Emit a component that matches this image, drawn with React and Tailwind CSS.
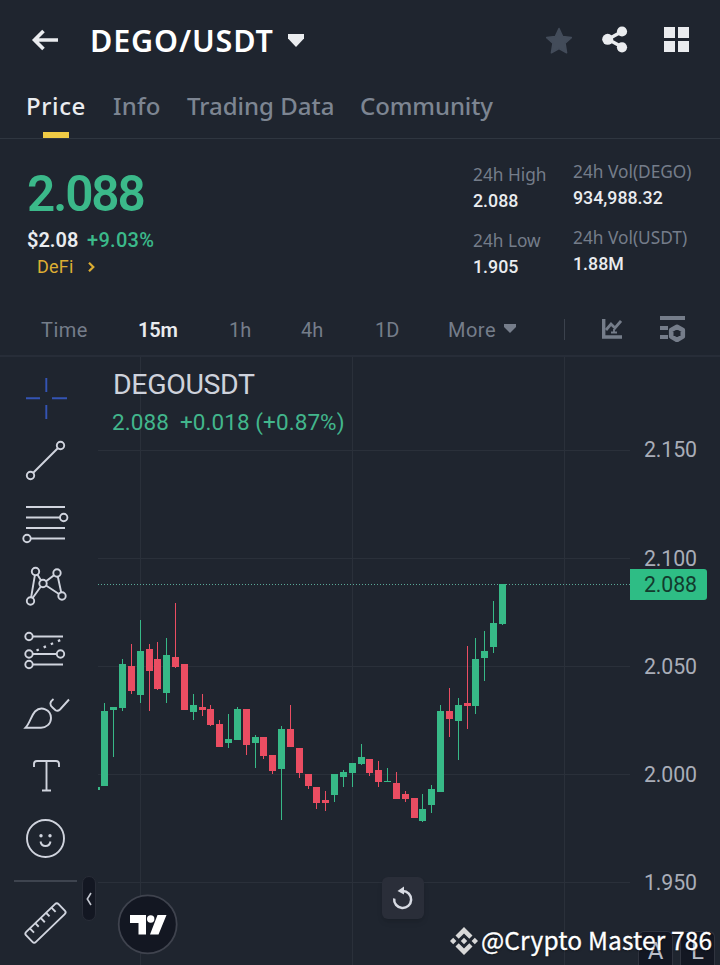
import React from "react";

const UP = "#37b987";
const DOWN = "#ea4d62";

// [left, high, bodyTop, bodyBottom, low, rising]
const candles = [
  [101, 703, 711, 786, 786, 1], [110, 707, 707, 710, 757, 1], [119, 659, 664, 708, 711, 1],
  [128, 644, 666, 691, 694, 0], [137, 620, 651, 695, 703, 1], [146, 644, 649, 671, 711, 0],
  [154, 642, 659, 689, 690, 0], [163, 638, 655, 693, 703, 1], [172, 603, 657, 667, 668, 0],
  [181, 664, 664, 710, 710, 0], [190, 694, 705, 712, 720, 1], [199, 694, 707, 710, 716, 0],
  [207, 705, 709, 725, 726, 0], [216, 720, 724, 747, 747, 0], [225, 714, 739, 743, 748, 1],
  [234, 707, 709, 740, 740, 1], [243, 709, 709, 745, 755, 0], [252, 735, 737, 743, 768, 1],
  [260, 737, 737, 756, 759, 0], [269, 755, 755, 771, 774, 0], [278, 726, 729, 769, 820, 1],
  [287, 705, 729, 747, 747, 0], [296, 748, 748, 773, 778, 0], [305, 774, 774, 786, 789, 0],
  [313, 787, 787, 803, 809, 0], [322, 791, 800, 803, 811, 0], [331, 774, 774, 795, 802, 1],
  [340, 770, 772, 777, 787, 1], [349, 763, 763, 773, 787, 1], [358, 744, 757, 764, 765, 1],
  [366, 759, 759, 773, 776, 0], [375, 761, 770, 782, 787, 0], [384, 768, 781, 782, 782, 1],
  [393, 772, 783, 799, 799, 0], [402, 791, 794, 799, 802, 0], [411, 798, 798, 818, 818, 0],
  [419, 794, 809, 821, 822, 1], [428, 785, 789, 805, 813, 1], [437, 705, 711, 792, 792, 1],
  [446, 688, 711, 719, 737, 0], [455, 698, 705, 721, 760, 1], [464, 646, 703, 706, 729, 0],
  [472, 638, 659, 706, 714, 1], [481, 631, 651, 658, 681, 1], [490, 601, 623, 647, 653, 1],
  [499, 584, 584, 624, 625, 1],
];

const ticks = [["2.150", 450], ["2.100", 558], ["2.050", 666], ["2.000", 774], ["1.950", 882]];

function Header() {
  return (
    <header className="flex h-20 shrink-0 items-center pl-[31px] pr-[31px]">
      <svg width="28" height="22" viewBox="0 0 28 22" fill="none" stroke="#eaecef" strokeWidth="3.6">
        <path d="M27 11H4M12.5 2 3.5 11l9 9" />
      </svg>
      <h1 className="ml-[31px] w-[183px] whitespace-nowrap text-[30.5px] leading-10 font-semibold tracking-[0.85px] text-white">DEGO/USDT</h1>
      <svg className="ml-[15px]" width="16" height="13" viewBox="0 0 16 13" fill="#eaecef">
        <path d="M0 0h16v4.5L8 13 0 4.5z" />
      </svg>
      <svg className="mt-px ml-auto" width="28" height="28" viewBox="0 0 28 28" fill="#434c5a" stroke="#434c5a" strokeWidth="1.5" strokeLinejoin="round">
        <path d="m14 1.5 3.7 8 8.6 1.1-6.2 5.7 1.5 9.5-7.6-4.2-7.6 4.2 1.5-9.5-6.2-5.7 8.6-1.1z" />
      </svg>
      <svg className="-mt-[2px] ml-[29px]" width="26" height="27" viewBox="0 0 26 27" fill="#eaecef">
        <path d="M20 5.5 6 13.3l14 7.8" fill="none" stroke="#eaecef" strokeWidth="3.4" />
        <circle cx="20" cy="5.5" r="5.1" /><circle cx="5.7" cy="13.3" r="5.5" /><circle cx="20" cy="21.3" r="5.1" />
      </svg>
      <svg className="-mt-px ml-[36px]" width="25" height="25" viewBox="0 0 25 25" fill="#eaecef">
        <path d="M0 0h11v11H0zM14 0h11v11H14zM0 14h11v11H0zM14 14h11v11H14z" />
      </svg>
    </header>
  );
}

function Tabs() {
  return (
    <nav className="flex h-[59px] shrink-0 border-b border-[#2f3640] pl-[26px] text-[24px] leading-[52px] font-medium whitespace-nowrap text-[#7d8592]">
      <div className="flex w-[60px] flex-col items-center">
        <span className="h-[52px] tracking-[0.6px] text-[#eaecef]">Price</span>
        <span className="h-[6px] w-[26px] bg-[#f0cb45]" />
      </div>
      <span className="ml-[27px] w-[47px] tracking-[0.2px]">Info</span>
      <span className="ml-[27px] w-[147px]">Trading Data</span>
      <span className="ml-[26px] tracking-[-0.1px]">Community</span>
    </nav>
  );
}

function Stat({ label, value }) {
  return (
    <div className="h-[66px] whitespace-nowrap">
      <div className="text-[17.3px] leading-[26px] text-[#757d8a]">{label}</div>
      <div className="font-[Roboto,sans-serif] text-[17.8px] leading-[26px] font-medium text-[#eaecef]">{value}</div>
    </div>
  );
}

function Summary() {
  return (
    <section className="flex h-[164px] shrink-0 pl-[27px]">
      <div className="w-[446px] pt-[26px] font-[Roboto,sans-serif]">
        <div className="text-[49.5px] leading-[58px] font-semibold tracking-[-2.1px] text-[#3bb98a]">2.088</div>
        <div className="mt-[3px] flex text-[20px] leading-[28px] font-semibold">
          <span className="w-[60px] text-[#eaecef]">$2.08</span>
          <span className="font-medium tracking-[0.3px] text-[#3bb98a]">+9.03%</span>
        </div>
        <div className="ml-[10px] flex items-center gap-[15px] text-[18px] leading-[26px] text-[#dcae33]">
          <span className="tracking-[0.2px]">DeFi</span>
          <svg width="7" height="10" viewBox="0 0 7 10" fill="none" stroke="#dcae33" strokeWidth="2.2"><path d="m1 .8 4.3 4.2L1 9.2" /></svg>
        </div>
      </div>
      <div className="w-[100px] pt-[23px]">
        <Stat label="24h High" value="2.088" />
        <Stat label="24h Low" value="1.905" />
      </div>
      <div className="pt-5">
        <Stat label="24h Vol(DEGO)" value="934,988.32" />
        <Stat label="24h Vol(USDT)" value="1.88M" />
      </div>
    </section>
  );
}

function Intervals() {
  return (
    <div className="flex h-[54px] shrink-0 items-center border-b-2 border-[#272d38] pt-px pl-[41px] font-[Roboto,sans-serif] text-[20px] whitespace-nowrap text-[#757d8a]">
      <span className="w-[97px] tracking-[0.5px]">Time</span>
      <span className="w-[91px] font-semibold tracking-[-0.2px] text-[#eaecef]">15m</span>
      <span className="w-[72px]">1h</span>
      <span className="w-[74px]">4h</span>
      <span className="w-[73px]">1D</span>
      <span className="w-[56px] tracking-[0.5px]">More</span>
      <svg className="-mt-[2px]" width="12" height="9" viewBox="0 0 12 9" fill="#757d8a"><path d="M0 0h12v3L6 9 0 3z" /></svg>
      <span className="ml-[48px] h-[21px] w-px bg-[#3b424d]" />
      <svg className="-mt-[2px] ml-[37px]" width="20" height="20" viewBox="0 0 20 20" fill="none" stroke="#757d8a">
        <path d="M1.7 0v18H20" strokeWidth="3.4" /><path d="m4 11 5-6 4 4 6-7" strokeWidth="2.8" /><path d="M9 13.500h6M12 10v3" strokeWidth="1.8" />
      </svg>
      <svg className="-mt-[2px] ml-[38px]" width="26" height="26" viewBox="0 0 26 26">
        <path d="M0 0h25v4H0zM0 10h8v4H0zM0 19h8v4H0z" fill="#757d8a" />
        <path d="M17 10.700 22.800 14v6.600L17 24l-5.800-3.400V14z" fill="none" stroke="#757d8a" strokeWidth="4.600" strokeLinejoin="round" />
      </svg>
    </div>
  );
}

function Tool({ children, color = "#d0d4de" }) {
  return (
    <div className="flex h-[63px] items-center pl-[22px]">
      <svg width="48" height="48" viewBox="0 0 48 48" fill="none" stroke={color} strokeWidth="1.9" overflow="visible">{children}</svg>
    </div>
  );
}

function Node({ x, y }) {
  return <circle cx={x} cy={y} r="3.7" fill="#1f252f" />;
}

function Toolbar() {
  return (
    <aside className="relative w-[98px] shrink-0 pt-[9px]">
      <Tool color="#3454b4"><path d="M24.3 4v14M24.3 31v14M4 24.3h14M30 24.3h15" /></Tool>
      <Tool><path d="m8.5 38.5 30-30" /><Node x={38.5} y={8.5} /><Node x={8.5} y={38.5} /></Tool>
      <Tool><path d="M4 7h39M4 17.5h37M4 28h39M5 38.5h38" /><Node x={41.7} y={17.5} /><Node x={5} y={38.5} /></Tool>
      <Tool>
        <path d="m8.5 38 5-29.500 7.500 12 14-10.500 5 23-19-12.500z" />
        <Node x={13.5} y={8.5} /><Node x={35} y={10} /><Node x={21} y={20.5} /><Node x={40} y={33} /><Node x={8.5} y={38} />
      </Tool>
      <Tool>
        <path d="M7 10.500h34M7 28h31M7 38.500h34" /><path d="m14.500 24.500 24-10.500" strokeDasharray="2.500 5.300" strokeWidth="2.200" />
        <Node x={7} y={10.5} /><Node x={7} y={28} /><Node x={7} y={38.5} /><Node x={38.5} y={28} />
      </Tool>
      <Tool><path d="M3.500 38.700C8 34 9 27 13 22.500c6-6 16-2 16 6.500 0 6-5 9.700-10 9.700zM31.500 10c-4 3-4 6-1 8.500l3 2.700c1.500 1 3 .7 4.500-.7l9-10" /></Tool>
      <Tool><path d="M12 15v-3q0-3 3-3h19q3 0 3 3v3M24.500 9v29.500M20 38.500h9" /></Tool>
      <Tool>
        <circle cx="23.500" cy="23.500" r="18.500" /><circle cx="19" cy="20.700" r="1.700" fill="#d0d4de" stroke="none" /><circle cx="28" cy="20.700" r="1.700" fill="#d0d4de" stroke="none" />
        <path d="M18.500 26.500c1 6 9 6 10 0" />
      </Tool>
      <div className="mt-[10px] ml-[14px] h-[2px] w-[63px] bg-[#3e444f]" />
      <svg className="mt-[19px] ml-[22px]" width="48" height="44" viewBox="0 0 48 44" fill="none" stroke="#d0d4de" strokeWidth="1.900">
        <g transform="translate(23.500 22) rotate(-44)">
          <rect x="-22.500" y="-7" width="45" height="14" rx="2.500" /><path d="M-15-7v6M-7.500-7v5M0-7v6M7.500-7v5M15-7v6" />
        </g>
      </svg>
      <div className="absolute top-[519px] left-[82px] flex h-[45px] w-[14px] items-center justify-center rounded-full border border-[#292d38] bg-[#131722]">
        <svg width="6" height="14" viewBox="0 0 6 14" fill="none" stroke="#c3c7d0" strokeWidth="1.600"><path d="M5 1 1.300 7 5 13" /></svg>
      </div>
    </aside>
  );
}

function Chart() {
  return (
    <div className="relative h-[608px] w-[622px]">
      <svg className="block" width="622" height="608" viewBox="98 357 622 608" fontFamily="Roboto, sans-serif">
        <g fill="#2a303a">
          {[140, 352, 564].map((x) => <rect key={x} x={x} y="357" width="1" height="608" />)}
          {ticks.map(([t, y]) => <rect key={t} x="98" y={y} width="532" height="1" />)}
        </g>
        <path d="M98 584.500h532" stroke="#5aa998" strokeDasharray="1 2" />
        <rect x="98" y="787" width="2" height="3" fill={UP} />
        {candles.map(([x, h, t, b, l, up]) => (
          <g key={x} fill={up ? UP : DOWN}>
            <rect x={x + 3} y={h} width="1" height={l - h} />
            <rect x={x} y={t} width="7" height={b - t} />
          </g>
        ))}
        <g fontSize="21.300" fill="#a9adb8">
          {ticks.map(([t, y], i) => <text key={t} x="644" y={y + (i ? 8 : 7)} textLength="53">{t}</text>)}
        </g>
        <path d="M630 569h74q3 0 3 3v25q0 3-3 3h-74z" fill="#2ebd85" />
        <text x="644" y="592" fontSize="21.300" fill="#123b2d" textLength="53">2.088</text>
        <text x="113" y="394" fontSize="28.500" fill="#ced2dc" textLength="142">DEGOUSDT</text>
        <g fontSize="22.500" fill="#42b68c">
          <text x="112" y="430" textLength="57">2.088</text>
          <text x="180" y="430" textLength="164.500">+0.018 (+0.87%)</text>
        </g>
        <circle cx="147.700" cy="924.300" r="29" fill="#131722" stroke="#3f434e" strokeWidth="1.800" />
        <path d="M130 915h16v19.500h-7.500V923H130zM157.500 915h9l-8 19.500h-8.500z" fill="#fff" /><circle cx="150.700" cy="919" r="3.700" fill="#fff" />
      </svg>
      <button className="absolute top-[520px] left-[284px] flex h-[42px] w-[42px] items-center justify-center rounded-md bg-[#2a2e39] shadow-md">
        <svg width="22" height="24" viewBox="0 0 22 24" fill="none" stroke="#d8dbe3" strokeWidth="2.500">
          <path d="M2.200 12.500A8.500 8.500 0 1 0 10.700 5" /><path d="M5.500 5 12 .5v8z" fill="#d8dbe3" stroke="none" />
        </svg>
      </button>
      <div className="absolute top-[574px] left-[540px] flex gap-[7px] font-[Roboto,sans-serif] text-[24px] leading-[38px] text-[#b9bdc8]">
        <span className="h-[34px] w-[35px] rounded-t-md border border-b-0 border-[#30343f] bg-[#131722] text-center">A</span>
        <span className="h-[34px] w-[35px] rounded-t-md border border-b-0 border-[#30343f] bg-[#131722] text-center">L</span>
      </div>
      <div className="absolute top-[565px] left-[352px] flex items-center whitespace-nowrap text-white">
        <svg className="mt-[2px]" width="28" height="28" viewBox="0 0 28 28" fill="#d8d8d8">
          <path d="m14 0 8.500 8.500-3.200 3.200L14 6.400l-5.300 5.300-3.200-3.200zM14 28l8.500-8.500-3.200-3.200-5.300 5.300-5.300-5.300-3.200 3.200zM14 10.800l3.200 3.200-3.200 3.200-3.200-3.200zM3.200 10.800 6.400 14l-3.200 3.200L0 14zM24.800 10.800 28 14l-3.200 3.200-3.200-3.200z" />
        </svg>
        <span className="ml-[3px] font-['Noto_Sans_CJK_SC',sans-serif] text-[24.5px] leading-9 tracking-[0.15px] [-webkit-text-stroke:0.3px_white] [text-shadow:0_1px_2px_#0008]">@Crypto Master 786</span>
      </div>
    </div>
  );
}

export default function App() {
  return (
    <main className="flex h-[965px] w-[720px] flex-col overflow-hidden bg-[#1f252f] font-['Noto_Sans',sans-serif]">
      <Header />
      <Tabs />
      <Summary />
      <Intervals />
      <div className="flex h-[608px]">
        <Toolbar />
        <Chart />
      </div>
    </main>
  );
}
